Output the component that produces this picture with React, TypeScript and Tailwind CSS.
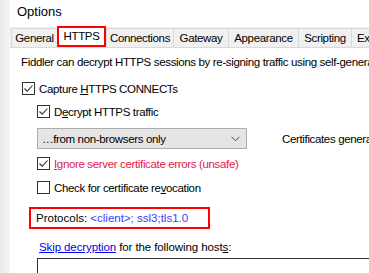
import React from "react";

const font = { fontFamily: '"Liberation Sans", Arial, sans-serif' };

function Check({ checked }: { checked: boolean }) {
  return (
    <div className="w-[13px] h-[13px] border border-[#333333] bg-white flex items-center justify-center shrink-0">
      {checked && (
        <svg width="11" height="11" viewBox="0 0 11 11">
          <path d="M1.5 5.5 L4.2 8.2 L9.5 2.5" fill="none" stroke="#333333" strokeWidth="1.1" />
        </svg>
      )}
    </div>
  );
}

export default function App() {
  const tabs: [string, string][] = [
    ["General", "w-[46px]"],
    ["HTTPS", "w-[49px]"],
    ["Connections", "w-[67px]"],
    ["Gateway", "w-[55px]"],
    ["Appearance", "w-[70px]"],
    ["Scripting", "w-[53px]"],
    ["Ex", "w-[30px]"],
  ];
  return (
    <div
      className="w-[369px] h-[273px] overflow-hidden bg-white flex text-[11.5px] tracking-[-0.35px] text-black"
      style={font}
    >
      <div className="w-[10px] shrink-0 bg-gradient-to-r from-[#e8e8e8] to-[#f6f6f6]" />
      <div className="flex-1 flex flex-col min-w-0">
        <div className="h-[27px] shrink-0 pl-[7px] pt-[4px] text-[13px] tracking-normal leading-[16px]">Options</div>
        <div className="h-[21px] shrink-0 bg-[#f0f0f0] flex items-end pl-[1px] border-b border-[#d9d9d9]">
          {tabs.map(([t, w], i) =>
            i === 1 ? (
              <div
                key={t}
                className={`${w} h-[21px] shrink-0 bg-white border-2 border-[#ff0000] flex items-center justify-center leading-[14px] pb-[2px]`}
              >
                {t}
              </div>
            ) : (
              <div
                key={t}
                className={`${w} h-[19px] shrink-0 border-l border-t border-[#d9d9d9] flex items-center ${
                  i === 6 ? "pl-[5px]" : "justify-center"
                } leading-[14px] whitespace-nowrap`}
              >
                {t}
              </div>
            )
          )}
        </div>
        <div className="flex flex-col pl-[11px] pt-[7px]">
          <div className="whitespace-nowrap leading-[15px]">
            Fiddler can decrypt HTTPS sessions by re-signing traffic using self-generated certificates.
          </div>
          <div className="flex items-center gap-[4px] mt-[12px] ml-[1px] h-[13px]">
            <Check checked />
            <span className="leading-[14px] whitespace-nowrap">
              Capture <span className="underline">H</span>TTPS CONNECTs
            </span>
          </div>
          <div className="flex items-center gap-[4px] mt-[10px] ml-[16px] h-[13px]">
            <Check checked />
            <span className="leading-[14px] whitespace-nowrap">
              D<span className="underline">e</span>crypt HTTPS traffic
            </span>
          </div>
          <div className="flex items-center mt-[10px] ml-[16px] h-[21px]">
            <div className="w-[210px] h-[21px] shrink-0 bg-[#e5e5e5] border border-[#adadad] flex items-center justify-between pl-[4px] pr-[6px]">
              <span className="leading-[14px] whitespace-nowrap">…from non-browsers only</span>
              <svg width="9" height="6" viewBox="0 0 9 6">
                <path d="M0.5 0.8 L4.5 4.8 L8.5 0.8" fill="none" stroke="#444" strokeWidth="1" />
              </svg>
            </div>
            <span className="ml-[35px] shrink-0 whitespace-nowrap leading-[14px]">Certificates generated by</span>
          </div>
          <div className="flex items-center gap-[4px] mt-[8px] ml-[16px] h-[13px]">
            <Check checked />
            <span className="leading-[14px] whitespace-nowrap text-[#e3174b]">
              <span className="underline">I</span>gnore server certificate errors (unsafe)
            </span>
          </div>
          <div className="flex items-center gap-[4px] mt-[11px] ml-[16px] h-[13px]">
            <Check checked={false} />
            <span className="leading-[14px] whitespace-nowrap">
              Check for certificate re<span className="underline">v</span>ocation
            </span>
          </div>
          <div className="mt-[13px] ml-[8px] w-[181px] h-[22px] shrink-0 border-2 border-[#ff0000] flex items-center pl-[5px] text-[11.5px] tracking-normal leading-[14px] whitespace-nowrap">
            <span>Protocols:&nbsp;</span>
            <span className="text-[#3c3cff]">&lt;client&gt;; ssl3;tls1.0</span>
          </div>
          <div className="mt-[11px] ml-[18px] leading-[14px] whitespace-nowrap tracking-[-0.1px] text-[11.5px]">
            <span className="text-[#0000ee] underline">Skip decryption</span> for the following host
            <span className="underline">s</span>:
          </div>
          <div className="mt-[4px] ml-[16px] h-[40px] shrink-0 border border-[#333333] border-r-0" />
        </div>
      </div>
    </div>
  );
}
